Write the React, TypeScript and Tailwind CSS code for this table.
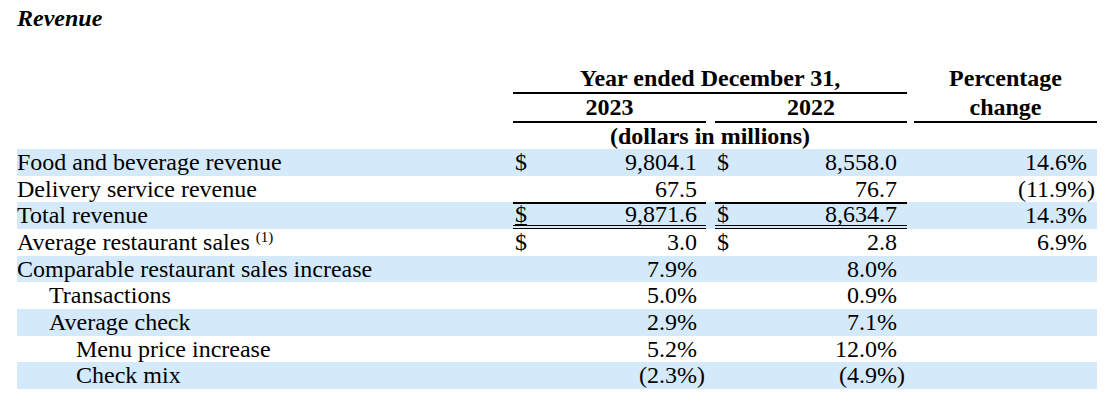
type Row = {
  label: string;
  indent?: 0 | 1 | 2;
  note?: string;
  aDollar?: boolean;
  a: string;
  bDollar?: boolean;
  b: string;
  pct?: string;
  band?: boolean;
  total?: boolean;
};

const ROWS: Row[] = [
  { label: 'Food and beverage revenue', aDollar: true, a: '9,804.1', bDollar: true, b: '8,558.0', pct: '14.6%', band: true },
  { label: 'Delivery service revenue', a: '67.5', b: '76.7', pct: '(11.9%)' },
  { label: 'Total revenue', aDollar: true, a: '9,871.6', bDollar: true, b: '8,634.7', pct: '14.3%', band: true, total: true },
  { label: 'Average restaurant sales', note: '(1)', aDollar: true, a: '3.0', bDollar: true, b: '2.8', pct: '6.9%' },
  { label: 'Comparable restaurant sales increase', a: '7.9%', b: '8.0%', band: true },
  { label: 'Transactions', indent: 1, a: '5.0%', b: '0.9%' },
  { label: 'Average check', indent: 1, a: '2.9%', b: '7.1%', band: true },
  { label: 'Menu price increase', indent: 2, a: '5.2%', b: '12.0%' },
  { label: 'Check mix', indent: 2, a: '(2.3%)', b: '(4.9%)', band: true },
];

const INDENT = ['pl-0', 'pl-[32px]', 'pl-[59px]'];

// closing paren hangs past the column edge, like the filing
function Num({ v }: { v: string }) {
  if (v.endsWith(')')) {
    return (
      <span>
        {v.slice(0, -1)}
        <span className="mr-[-8px]">)</span>
      </span>
    );
  }
  return <span>{v}</span>;
}

function Group({
  dollar,
  value,
  width,
  pr,
  total,
  underlineDollar,
}: {
  dollar?: boolean;
  value: string;
  width: string;
  pr: string;
  total?: boolean;
  underlineDollar?: boolean;
}) {
  return (
    <div
      className={`flex h-full ${width} ${pr} items-center justify-between pl-[2px] ${
        total ? 'border-t-2 border-b-4 border-double border-t-black border-b-black' : ''
      }`}
      style={total ? { borderTopStyle: 'solid' } : undefined}
    >
      <span className={underlineDollar && dollar ? 'underline decoration-1 underline-offset-2' : ''}>{dollar ? '$' : ''}</span>
      <Num v={value} />
    </div>
  );
}

export default function App() {
  return (
    <div className="w-[1106px] h-[404px] bg-white pl-[17px] pt-[5px] text-black text-[24px] font-['Liberation_Serif','Times_New_Roman',serif] overflow-hidden">
      <div className="h-[27px] leading-[27px] font-bold italic">Revenue</div>

      <div className="mt-[32px] font-bold">
        <div className="flex h-[30px] leading-[28px]">
          <div className="w-[496px]" />
          <div className="w-[394px] border-b-2 border-black text-center">Year ended December 31,</div>
          <div className="w-[7px]" />
          <div className="w-[183px] text-center">Percentage</div>
        </div>
        <div className="flex h-[29px] leading-[27px]">
          <div className="w-[496px]" />
          <div className="w-[193px] border-b-2 border-black text-center">2023</div>
          <div className="w-[9px]" />
          <div className="w-[192px] border-b-2 border-black text-center">2022</div>
          <div className="w-[7px]" />
          <div className="w-[183px] border-b-2 border-black text-center">change</div>
        </div>
        <div className="flex h-[26px] leading-[26px]">
          <div className="w-[496px]" />
          <div className="w-[394px] text-center">(dollars in millions)</div>
        </div>
      </div>

      <div className="w-[1080px]">
        {ROWS.map((r) => (
          <div key={r.label} className={`flex h-[26.67px] items-center leading-[26.67px] ${r.band ? 'bg-[#d4eafa]' : ''}`}>
            <div className={`w-[496px] whitespace-nowrap ${INDENT[r.indent ?? 0]}`}>
              {r.label}
              {r.note && <sup className="ml-[6px] text-[15px] leading-none">{r.note}</sup>}
            </div>
            <Group dollar={r.aDollar} value={r.a} width="w-[193px]" pr="pr-[9px]" total={r.total} underlineDollar={r.total} />
            <div className="w-[9px]" />
            <Group dollar={r.bDollar} value={r.b} width="w-[192px]" pr="pr-[10px]" total={r.total} />
            <div className="w-[7px]" />
            <div className="w-[183px] pr-[10px] text-right">{r.pct ? <Num v={r.pct} /> : null}</div>
          </div>
        ))}
      </div>
    </div>
  );
}
